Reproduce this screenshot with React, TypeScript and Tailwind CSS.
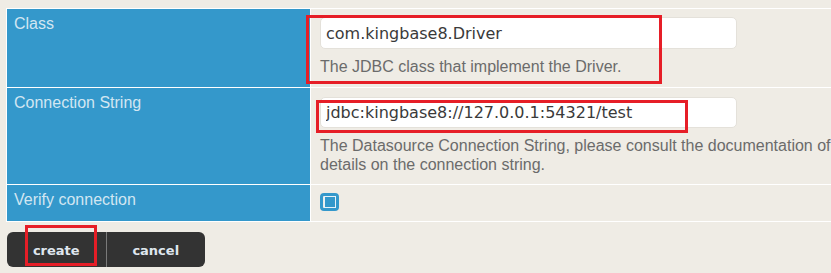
import React from "react";

/* ===============================
   DATASOURCE FORM (JDBC driver)
================================ */
const label = "align-top border border-white bg-[#3498cb] text-[#d2e6f2] text-[16px] leading-[19px] pl-[7px] pt-[5px] w-[304px]";
const cell = "align-top border border-white pl-[9px] pr-2";
const help = "text-[16px] leading-[19px] text-[#6b6b6b] whitespace-nowrap";
const input =
  "block w-[417px] rounded-[5px] border border-[#e4e1da] bg-white px-[5px] text-[16px] text-[#3a3a3a] outline-none [font-family:'DejaVu_Sans',sans-serif]";

export default function App() {
  return (
    <div className="relative h-[273px] w-full overflow-hidden bg-[#efece5] pl-[6px] pt-[8px] [font-family:'Liberation_Sans',Arial,sans-serif]">
      <table className="w-[1100px] border-collapse border border-white">
        <tbody>
          {/* Class row */}
          <tr className="h-[79px]">
            <td className={label}>Class</td>
            <td className={`${cell} pt-[8px]`}>
              <input className={`${input} h-[32px]`} defaultValue="com.kingbase8.Driver" />
              <p className={`${help} mt-[8px]`}>The JDBC class that implement the Driver.</p>
            </td>
          </tr>

          {/* Connection string row */}
          <tr className="h-[97px]">
            <td className={label}>Connection String</td>
            <td className={`${cell} pt-[9px]`}>
              <input className={`${input} h-[31px]`} defaultValue="jdbc:kingbase8://127.0.0.1:54321/test" />
              <p className={`${help} mt-[8px]`}>
                The Datasource Connection String, please consult the documentation of your database driver for
                <br />
                details on the connection string.
              </p>
            </td>
          </tr>

          {/* Verify checkbox row */}
          <tr className="h-[37px]">
            <td className={label}>Verify connection</td>
            <td className={`${cell} pt-[8px]`}>
              <div className="flex h-[18px] w-[19px] items-center justify-center rounded-[4px] border-[3px] border-[#3498cb]">
                <div className="h-[12px] w-[12px] border border-[#e8f2f8] bg-[#3498cb]" />
              </div>
            </td>
          </tr>
        </tbody>
      </table>

      {/* Action buttons */}
      <div className="mt-[10px] ml-px flex h-[35px] w-[198px] overflow-hidden rounded-[6px] bg-[#333333] text-[13px] font-bold text-[#dfe6ee] [font-family:'DejaVu_Sans',sans-serif]">
        <button className="flex-1 border-r border-[#7a7a7a] pt-[2px]">create</button>
        <button className="flex-1 pt-[2px]">cancel</button>
      </div>

      {/* Red annotation boxes */}
      <div className="pointer-events-none absolute left-[306px] top-[15px] h-[69px] w-[356px] border-[3px] border-[#e61e27]" />
      <div className="pointer-events-none absolute left-[316px] top-[100px] h-[33px] w-[372px] border-[3px] border-[#e61e27]" />
      <div className="pointer-events-none absolute left-[25px] top-[225px] h-[41px] w-[72px] border-[3px] border-[#e61e27]" />
    </div>
  );
}
